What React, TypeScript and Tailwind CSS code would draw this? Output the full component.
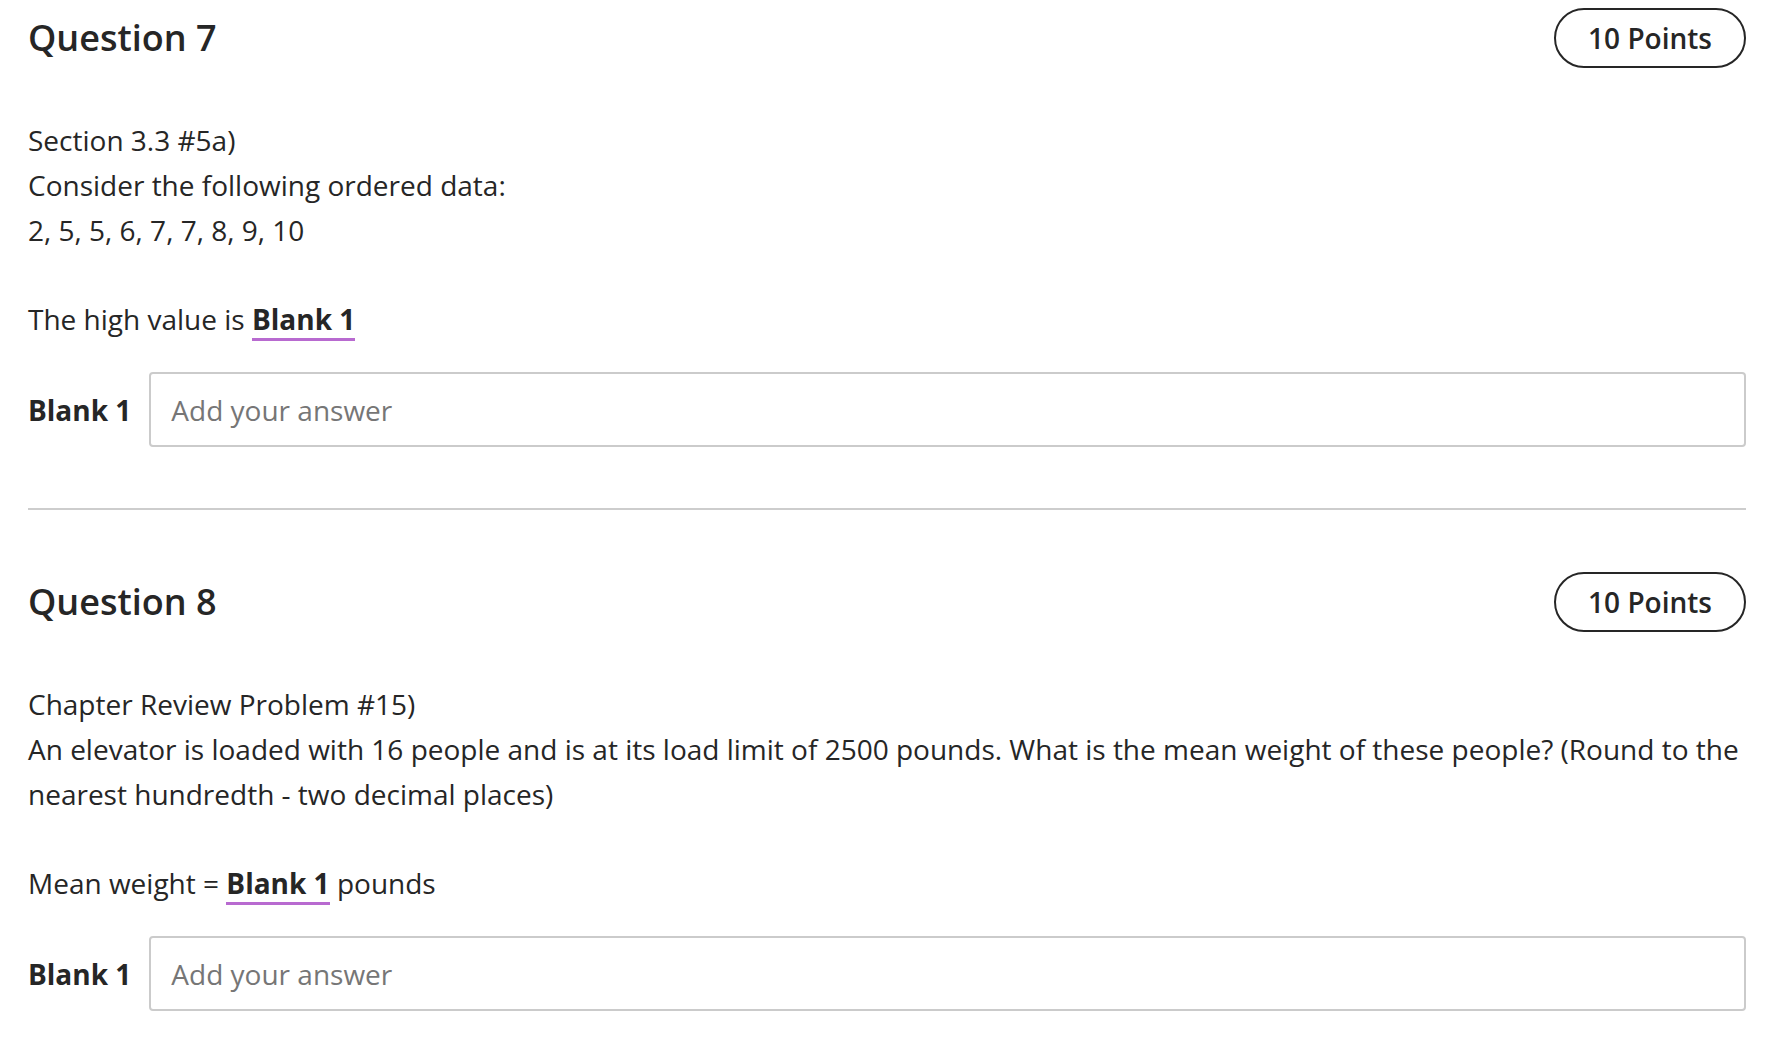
const FONT = "font-['Open_Sans',_'Liberation_Sans',_sans-serif]";

interface BlankRowProps {
  label: string;
}

function PointsPill() {
  return (
    <div className="h-[60px] px-[32px] flex items-center rounded-full border-2 border-[#262626] text-[28px] font-semibold text-[#262626] leading-none whitespace-nowrap">
      10 Points
    </div>
  );
}

function Blank({ children }: { children: string }) {
  return (
    <span className="font-bold border-b-[3px] border-[#b86ad0]">{children}</span>
  );
}

function BlankRow({ label }: BlankRowProps) {
  return (
    <div className="mt-[30px] flex items-center gap-[18px]">
      <span className="text-[28px] font-bold text-[#262626] whitespace-nowrap">
        {label}
      </span>
      <input
        type="text"
        placeholder="Add your answer"
        className="flex-1 h-[75px] pl-[20px] rounded-[4px] border-2 border-[#cbcbcb] text-[28px] text-[#262626] placeholder:text-[#767676] outline-none bg-white"
      />
    </div>
  );
}

function QuestionHeader({ title }: { title: string }) {
  return (
    <div className="flex items-center justify-between">
      <h2 className="text-[36px] font-semibold text-[#262626] leading-none">
        {title}
      </h2>
      <PointsPill />
    </div>
  );
}

export default function App() {
  return (
    <div className={`${FONT} bg-white min-h-screen pl-[28px] pr-[30px] pt-[8px] text-[#262626]`}>
      {/* Question 7 */}
      <section>
        <QuestionHeader title="Question 7" />
        <div className="mt-[50px] text-[28px] leading-[45px]">
          <p>Section 3.3 #5a)</p>
          <p>Consider the following ordered data:</p>
          <p>2, 5, 5, 6, 7, 7, 8, 9, 10</p>
          <p className="mt-[44px]">
            The high value is <Blank>Blank 1</Blank>
          </p>
        </div>
        <BlankRow label="Blank 1" />
      </section>

      <div className="mt-[61px] h-[2px] bg-[#cdcdcd]" />

      {/* Question 8 */}
      <section className="mt-[62px]">
        <QuestionHeader title="Question 8" />
        <div className="mt-[50px] text-[28px] leading-[45px]">
          <p>Chapter Review Problem #15)</p>
          <p>
            An elevator is loaded with 16 people and is at its load limit of 2500
            pounds. What is the mean weight of these people? (Round to the
            nearest hundredth - two decimal places)
          </p>
          <p className="mt-[44px]">
            Mean weight = <Blank>Blank 1</Blank> pounds
          </p>
        </div>
        <BlankRow label="Blank 1" />
      </section>
    </div>
  );
}
